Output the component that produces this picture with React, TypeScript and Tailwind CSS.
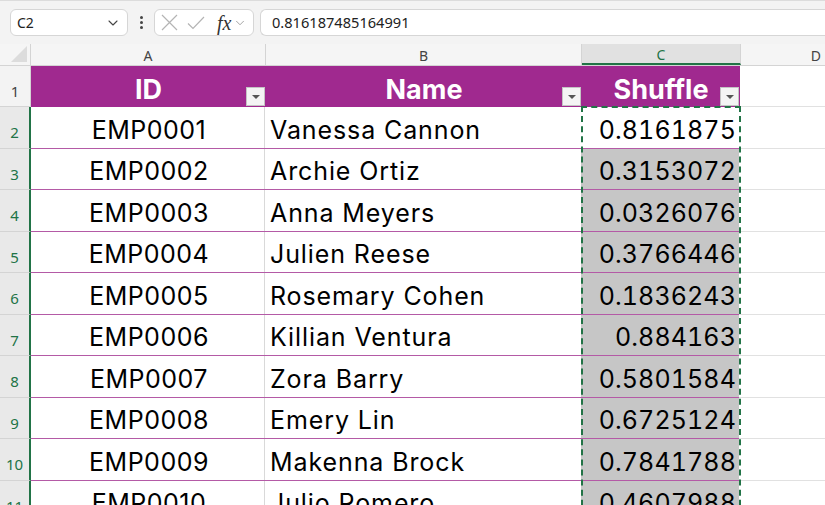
import { ChevronDown } from "lucide-react";

type Row = { id: string; name: string; shuffle: string };

const rows: Row[] = [
  { id: "EMP0001", name: "Vanessa Cannon", shuffle: "0.8161875" },
  { id: "EMP0002", name: "Archie Ortiz", shuffle: "0.3153072" },
  { id: "EMP0003", name: "Anna Meyers", shuffle: "0.0326076" },
  { id: "EMP0004", name: "Julien Reese", shuffle: "0.3766446" },
  { id: "EMP0005", name: "Rosemary Cohen", shuffle: "0.1836243" },
  { id: "EMP0006", name: "Killian Ventura", shuffle: "0.884163" },
  { id: "EMP0007", name: "Zora Barry", shuffle: "0.5801584" },
  { id: "EMP0008", name: "Emery Lin", shuffle: "0.6725124" },
  { id: "EMP0009", name: "Makenna Brock", shuffle: "0.7841788" },
  { id: "EMP0010", name: "Julio Romero", shuffle: "0.4607988" },
];

const ui = { fontFamily: '"Noto Sans", "Liberation Sans", sans-serif' };
const cellFont = { fontFamily: 'Inter, "Liberation Sans", sans-serif' };

function FilterButton() {
  return (
    <div className="absolute bottom-[1px] right-[1px] flex h-[19px] w-[19px] items-center justify-center border border-[#c4c4c4] bg-[#f4f4f4]">
      <div className="h-0 w-0 border-x-[4px] border-t-[4px] border-x-transparent border-t-[#555]" />
    </div>
  );
}

export default function App() {
  return (
    <div className="relative h-[505px] w-[825px] overflow-hidden bg-white" style={ui}>
      {/* formula bar */}
      <div className="flex h-[44px] items-center gap-[6px] border-t border-[#dcdcdc] bg-[#f3f3f3] pl-[10px]">
        <div className="flex h-[27px] w-[118px] items-center justify-between rounded-md border border-[#d6d6d6] bg-white pl-[6px] pr-[6px] text-[14px] text-[#222]">
          <span>C2</span>
          <ChevronDown size={16} strokeWidth={1.6} className="text-[#444]" />
        </div>
        <div className="flex w-[14px] flex-col items-center gap-[2px]">
          <span className="h-[3px] w-[3px] rounded-full bg-[#444]" />
          <span className="h-[3px] w-[3px] rounded-full bg-[#444]" />
          <span className="h-[3px] w-[3px] rounded-full bg-[#444]" />
        </div>
        <div className="flex h-[27px] w-[100px] items-center rounded-md border border-[#d6d6d6] bg-white pl-[6px] text-[#b4b4b4]">
          <svg width="17" height="17" viewBox="0 0 17 17" fill="none" stroke="currentColor" strokeWidth="1.2">
            <path d="M1 1 16 16M16 1 1 16" />
          </svg>
          <svg width="18" height="14" viewBox="0 0 18 14" fill="none" stroke="currentColor" strokeWidth="1.2" className="ml-[9px]">
            <path d="M1 7.5 6 12.5 17 1" />
          </svg>
          <span className="ml-[12px] text-[20px] italic leading-none text-[#333]" style={{ fontFamily: '"Liberation Serif", serif' }}>
            fx
          </span>
          <ChevronDown size={14} strokeWidth={1.3} className="ml-[2px] text-[#888]" />
        </div>
        <div className="flex h-[27px] flex-1 items-center rounded-l-md border border-r-0 border-[#d6d6d6] bg-white pl-[11px] text-[14.6px] text-[#222]">
          0.816187485164991
        </div>
      </div>

      {/* column headers */}
      <div className="flex h-[22px] border-b border-[#d4d4d4] bg-[#f5f5f5] text-[14px] text-[#444]">
        <div className="relative w-[31px] border-r border-[#d4d4d4]">
          <div className="absolute bottom-[3px] right-[3px] h-0 w-0 border-b-[16px] border-l-[16px] border-b-[#dcdcdc] border-l-transparent" />
        </div>
        <div className="flex w-[235px] items-center justify-center border-r border-[#d4d4d4] pt-[1px]">A</div>
        <div className="flex w-[316px] items-center justify-center border-r border-[#d4d4d4] pt-[1px]">B</div>
        <div className="flex w-[159px] items-center justify-center border-b-2 border-r border-b-[#217346] border-r-[#d4d4d4] bg-[#e1e1e1] pt-[1px] text-[#217346]">
          C
        </div>
        <div className="flex flex-1 items-center justify-end pr-[4px] pt-[1px]">D</div>
      </div>

      {/* header row */}
      <div className="flex h-[41px]">
        <div className="flex w-[31px] items-end justify-center border-b border-r border-[#d4d4d4] bg-[#f3f3f3] pb-[4px] text-[15px] text-[#444]">
          1
        </div>
        <div className="flex bg-[#a0298f] text-[27px] font-bold text-white" style={cellFont}>
          <div className="relative flex w-[235px] items-center justify-center pt-[7px]">
            ID
            <FilterButton />
          </div>
          <div className="relative flex w-[316px] items-center justify-center pt-[7px]">
            Name
            <FilterButton />
          </div>
          <div className="relative flex w-[158px] items-center justify-center pt-[7px]">
            Shuffle
            <FilterButton />
          </div>
        </div>
        <div className="flex-1 border-b border-[#e1e1e1]" />
      </div>

      {/* data rows */}
      {rows.map((row, i) => (
        <div key={row.id} className="flex h-[41.5px]">
          <div className="flex w-[31px] items-end justify-center border-b border-r-2 border-b-[#d4d4d4] border-r-[#217346] bg-[#e9e9e9] pb-[4px] text-[15px] text-[#217346]">
            {i + 2}
          </div>
          <div className="flex border-b border-[#b45aa6] text-[25px] text-black" style={cellFont}>
            <div className="flex w-[234px] items-center justify-center border-r border-[#d9d9d9] pl-[3px] pt-[6px] tracking-[0.5px]">
              {row.id}
            </div>
            <div className="flex w-[316px] items-center pl-[5px] pt-[6px] tracking-[0.9px]">{row.name}</div>
            <div
              className={`flex w-[158px] items-center justify-end pr-[3px] pt-[6px] tracking-[0.1px] tabular-nums ${
                i === 0 ? "bg-white" : "bg-[#c6c6c6]"
              }`}
            >
              {row.shuffle}
            </div>
          </div>
          <div className="flex-1 border-b border-[#e1e1e1]" />
        </div>
      ))}

      {/* copy selection outline */}
      <div className="pointer-events-none absolute left-[581px] top-[106px] h-[420px] w-[160px] border-2 border-dashed border-[#217346]" />
    </div>
  );
}
